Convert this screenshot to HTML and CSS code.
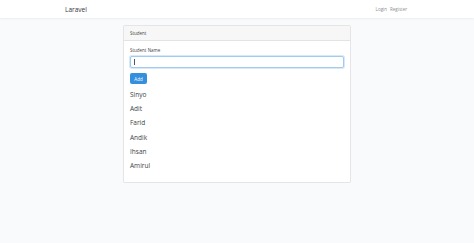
FILE: index.html
```html
<!DOCTYPE html>
<html lang="en">
<head>
    <meta charset="UTF-8">
    <meta name="viewport" content="width=device-width, initial-scale=1.0">
    <title>Laravel</title>
    <link rel="stylesheet" href="styles.css">
</head>
<body>
    <!-- Navbar -->
    <nav class="navbar">
        <div class="container nav-inner">
            <a class="brand" href="#">Laravel</a>
            <div class="nav-links">
                <a href="#">Login</a>
                <a href="#">Register</a>
            </div>
        </div>
    </nav>

    <main class="main">
        <div class="card">
            <div class="card-header">Student</div>
            <div class="card-body">
                <form class="student-form">
                    <label for="name">Student Name</label>
                    <div class="input-wrap">
                        <input type="text" id="name" class="form-control">
                        <span class="caret"></span>
                    </div>
                    <button type="button" class="btn-add">Add</button>
                </form>
                <ul class="student-list">
                    <li>Sinyo</li>
                    <li>Adit</li>
                    <li>Farid</li>
                    <li>Andik</li>
                    <li>Ihsan</li>
                    <li>Amirul</li>
                </ul>
            </div>
        </div>
    </main>
</body>
</html>
```

FILE: styles.css
```css
/* Base */
body {
    margin: 0;
    padding: 0;
    font-family: "Open Sans", "Liberation Sans", sans-serif;
    background-color: #f8fafc;
    color: #212529;
    height: 243px;
}

.container {
    width: 344px;
    margin: 0 auto;
}

/* Navbar */
.navbar {
    background-color: #fff;
    height: 18px;
    box-shadow: 0 1px 2px rgba(0, 0, 0, 0.06);
}

.nav-inner {
    display: flex;
    justify-content: space-between;
    align-items: center;
    height: 18px;
}

.brand {
    font-size: 6.5px;
    color: #33373b;
    text-decoration: none;
}

.nav-links {
    display: flex;
    gap: 3px;
    margin-right: 2px;
}

.nav-links a {
    font-size: 4.5px;
    color: #8a8f94;
    text-decoration: none;
}

/* Card */
.main {
    padding-top: 7px;
}

.card {
    width: 226px;
    height: 156px;
    margin: 0 auto;
    background-color: #fff;
    border: 1px solid rgba(0, 0, 0, 0.1);
    border-radius: 2px;
}

.card-header {
    height: 14px;
    line-height: 14px;
    padding: 0 6px;
    font-size: 4.5px;
    color: #444;
    background-color: #f7f7f7;
    border-bottom: 1px solid rgba(0, 0, 0, 0.08);
}

.card-body {
    padding: 6px 6px;
}

.student-form label {
    display: block;
    font-size: 4.5px;
    color: #444;
    margin-bottom: 3px;
}

.input-wrap {
    position: relative;
}

.form-control {
    display: block;
    box-sizing: border-box;
    width: 100%;
    height: 12px;
    border: 1px solid #a1cbef;
    border-radius: 2px;
    box-shadow: 0 0 0 1px rgba(52, 144, 220, 0.2);
    outline: none;
    padding: 0 3px;
    font-size: 5px;
}

/* text cursor shown in the focused field */
.caret {
    position: absolute;
    left: 4px;
    top: 3px;
    width: 0.6px;
    height: 6px;
    background-color: #555;
}

.btn-add {
    display: block;
    margin-top: 5px;
    width: 17px;
    height: 11px;
    padding: 0;
    border: none;
    border-radius: 2px;
    background-color: #3490dc;
    color: #fff;
    font-family: inherit;
    font-size: 4.5px;
}

.student-list {
    list-style: none;
    margin: 4px 0 0;
    padding: 0;
}

.student-list li {
    font-size: 6.5px;
    color: #3a3f44;
    height: 14.2px;
    line-height: 14.2px;
}
```
